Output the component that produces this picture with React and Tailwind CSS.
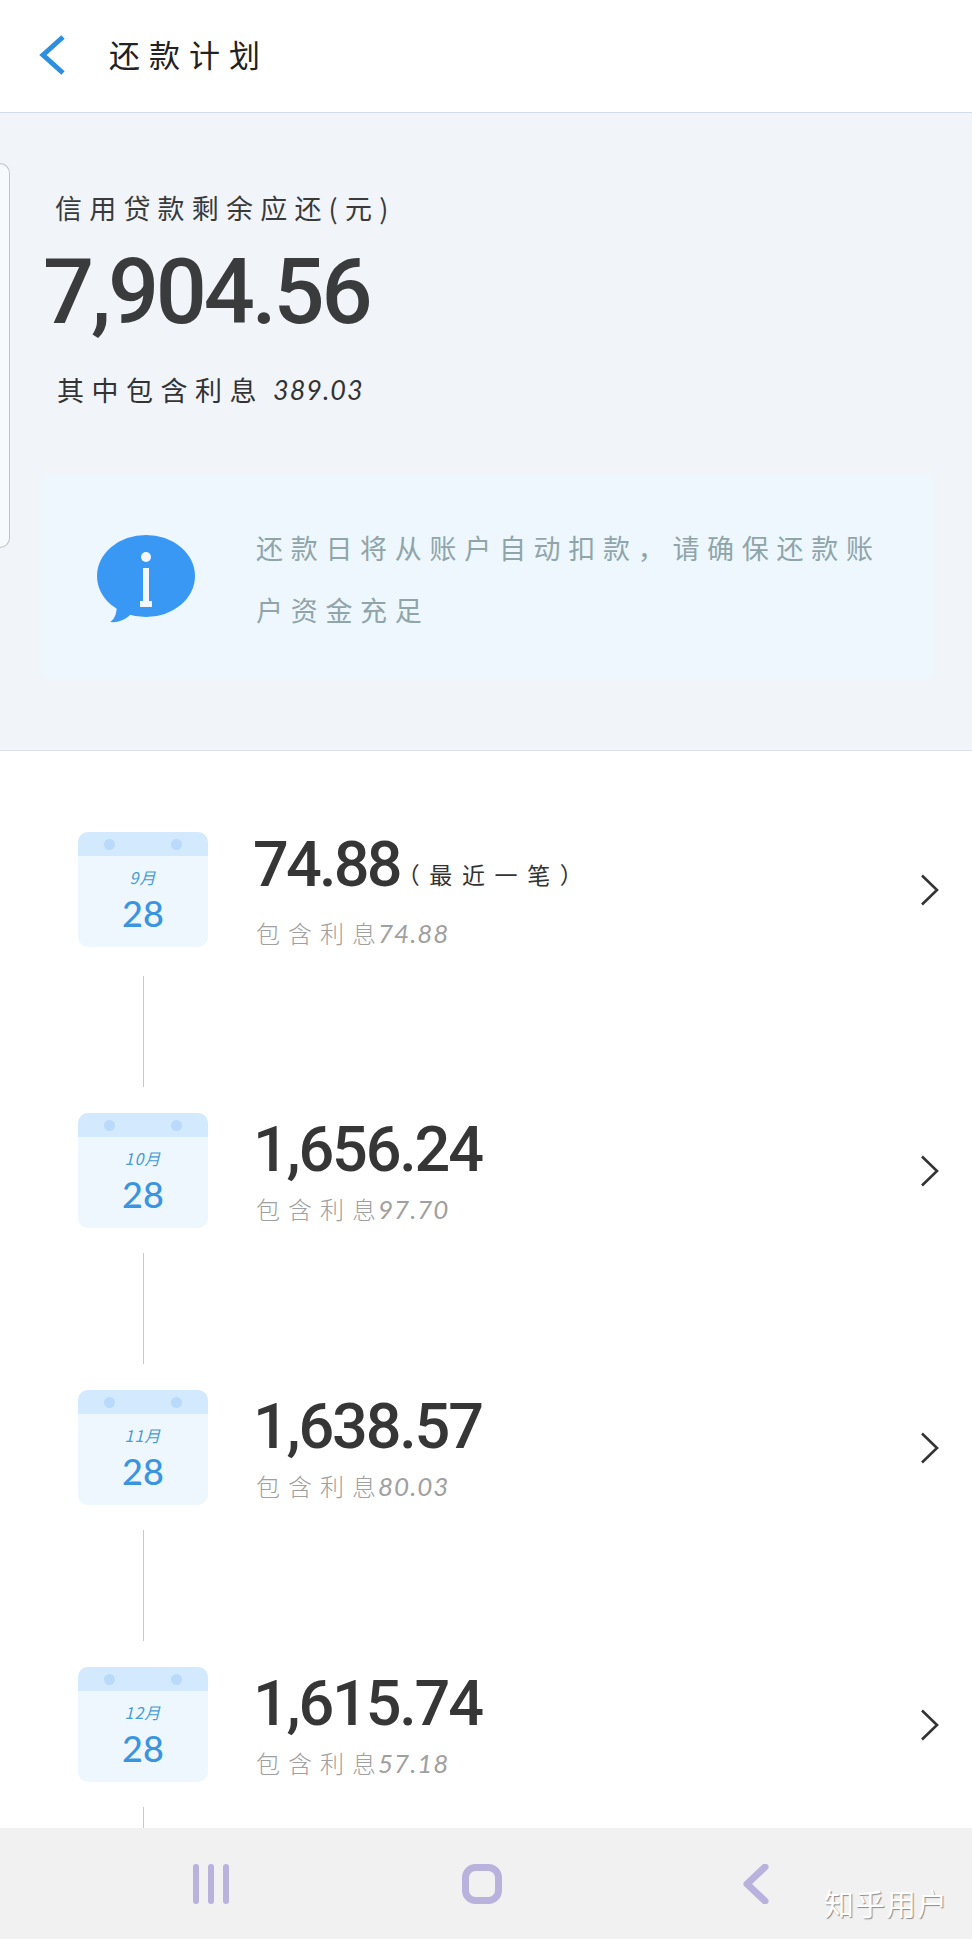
import React from 'react';

const plans = [
  { month: '9月', amount: '74.88', interest: '74.88', latest: true },
  { month: '10月', amount: '1,656.24', interest: '97.70' },
  { month: '11月', amount: '1,638.57', interest: '80.03' },
  { month: '12月', amount: '1,615.74', interest: '57.18' },
];

const CalendarBadge = ({ month }) => (
  <div className="w-[130px] h-[115px] rounded-[10px] bg-[#eef7fe] overflow-hidden flex flex-col items-center">
    <div className="w-full h-[24px] bg-[#d3e9fd] flex items-center justify-between px-[26px]">
      <div className="w-[11px] h-[11px] rounded-full bg-[#b9dafa]"></div>
      <div className="w-[11px] h-[11px] rounded-full bg-[#b9dafa]"></div>
    </div>
    <div className="mt-[11px] text-[16px] leading-[20px] text-[#4a9bd4] tracking-[1px] italic">{month}</div>
    <div className="mt-[7px] text-[36px] leading-[38px] font-medium text-[#3b94e0] font-['Lato',sans-serif]">28</div>
  </div>
);

const PlanRow = ({ plan, index }) => (
  <div>
    <div className="h-[115px] flex items-stretch pl-[78px] pr-[32px]">
      <CalendarBadge month={plan.month} />
      <div className="flex-1 pl-[45px]">
        <div className={`flex items-end text-[#363636] ${plan.latest ? 'mt-[-3px]' : 'mt-[1px]'}`}>
          <span className={`font-['Roboto',sans-serif] font-medium text-[63px] leading-[72px] ${plan.latest ? 'tracking-[-2.8px]' : 'tracking-[-2.2px]'}`}>{plan.amount}</span>
          {plan.latest && (
            <span className="ml-[-3px] mb-[12px] text-[23px] leading-[30px] tracking-[9.6px] text-[#333]">（最近一笔）</span>
          )}
        </div>
        <div className={`pl-[3px] flex items-center text-[#a0a0a0] text-[24px] leading-[32px] ${plan.latest ? 'mt-[16px]' : 'mt-[7px]'}`}>
          <span className="tracking-[8px] font-light">包含利息</span>
          <span className="font-['Lato',sans-serif] italic text-[26px] tracking-[1px] ml-[-6px]">{plan.interest}</span>
        </div>
      </div>
      <div className="flex items-center">
        <svg width="20" height="32" viewBox="0 0 20 32" fill="none">
          <path d="M2 1.5 L17 16 L2 30.5" stroke="#333" strokeWidth="2.6" />
        </svg>
      </div>
    </div>
    <div className={`ml-[143px] mb-[26px] w-[1px] h-[111px] bg-[#c9c9c9] ${index === 0 ? 'mt-[29px]' : 'mt-[25px]'}`}></div>
  </div>
);

export default function App() {
  return (
    <div className="relative w-[972px] h-[1939px] overflow-hidden bg-white flex flex-col font-['Noto_Sans_CJK_SC',sans-serif]">
      {/* Header */}
      <div className="h-[113px] shrink-0 border-b border-[#d3dbe4] flex items-center pl-[38px]">
        <svg width="30" height="40" viewBox="0 0 30 40" fill="none" className="mb-[2px]">
          <path d="M25 2 L5 20 L25 38" stroke="#2d8fdd" strokeWidth="5" />
        </svg>
        <h1 className="ml-[41px] mb-[4px] text-[31px] leading-[40px] tracking-[9px] text-[#222] font-normal">还款计划</h1>
      </div>

      {/* Summary */}
      <div className="relative h-[638px] shrink-0 bg-[#f1f5fa] border-b border-[#dde3ea] pt-[77px]">
        <div className="absolute left-0 top-[50px] w-[10px] h-[385px] bg-[#f7fafd] border border-l-0 border-[#bcc4cf] rounded-r-[10px]"></div>
        <div className="pl-[55px] text-[27px] leading-[36px] tracking-[7.2px] text-[#3a3a3a]">信用贷款剩余应还(元)</div>
        <div className="pl-[43px] mt-[17px] font-['Roboto',sans-serif] font-medium text-[90px] leading-[100px] tracking-[-3.2px] text-[#3a3b3d]">7,904.56</div>
        <div className="pl-[57px] mt-[29px] flex items-center text-[#333] text-[27px] leading-[36px]">
          <span className="tracking-[7.5px]">其中包含利息</span>
          <span className="ml-[9px] font-['Lato',sans-serif] italic text-[27px] tracking-[1px]">389.03</span>
        </div>

        <div className="mx-[40px] mt-[67px] mr-[37px] h-[204px] pt-[4px] rounded-[10px] bg-[#eef7fe] flex items-center pl-[57px] pr-[38px]">
          <svg width="98" height="88" viewBox="0 0 98 88" className="shrink-0">
            <ellipse cx="49" cy="41" rx="49" ry="41" fill="#3a98f5" />
            <path d="M20 68 C20 78 18 84 13 87 C22 88 30 84 36 77 Z" fill="#3a98f5" />
            <circle cx="49" cy="22" r="5" fill="#f2f8fe" />
            <path d="M46 33 H52 V66 H55 V72 H43 V66 H46 Z" fill="#f2f8fe" />
          </svg>
          <p className="ml-[61px] text-[27px] leading-[62px] tracking-[7.7px] text-[#8fa5aa]">还款日将从账户自动扣款，请确保还款账户资金充足</p>
        </div>
      </div>

      {/* Repayment list */}
      <div className="flex-1 min-h-0 overflow-hidden pt-[81px]">
        {plans.map((plan, index) => (
          <PlanRow key={plan.month} plan={plan} index={index} />
        ))}
      </div>

      {/* Nav bar */}
      <div className="h-[111px] shrink-0 bg-[#f1f1f1] flex items-center pl-[193px] pt-[1px]">
        <svg width="36" height="40" viewBox="0 0 36 40" fill="#b8b2dd">
          <rect x="0" y="0" width="6" height="40" rx="3" />
          <rect x="15" y="0" width="6" height="40" rx="3" />
          <rect x="30" y="0" width="6" height="40" rx="3" />
        </svg>
        <svg width="40" height="40" viewBox="0 0 40 40" fill="none" className="ml-[233px]">
          <rect x="3.5" y="3.5" width="33" height="33" rx="10" stroke="#b8b2dd" strokeWidth="7" />
        </svg>
        <svg width="28" height="40" viewBox="0 0 28 40" fill="none" className="ml-[240px]">
          <path d="M23 3 L5 20 L23 37" stroke="#b8b2dd" strokeWidth="7" strokeLinecap="round" strokeLinejoin="round" />
        </svg>
      </div>

      {/* Watermark */}
      <div className="absolute left-[824px] top-[1884px] text-[30px] leading-[36px] tracking-[1px] text-white [text-shadow:1px_1px_1px_#8a8a8a]">知乎用户</div>
    </div>
  );
}
